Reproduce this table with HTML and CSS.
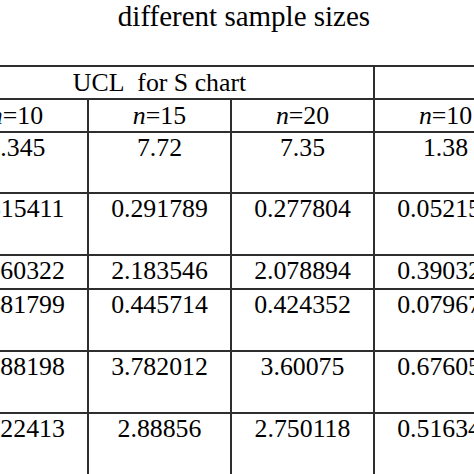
FILE: index.html
```html
<!DOCTYPE html>
<html>
<head>
<meta charset="utf-8">
<link rel="stylesheet" href="styles.css">
</head>
<body>
<h1 class="title">different sample sizes</h1>
<div class="frame">
<table class="grid">
<colgroup>
<col class="c"><col class="c"><col class="c"><col class="c"><col class="c"><col class="c">
</colgroup>
<tr class="h1">
<td colspan="3">UCL&nbsp; for S chart</td>
<td colspan="3">LCL&nbsp; for S chart</td>
</tr>
<tr class="h2">
<td><i>n</i>=10</td><td><i>n</i>=15</td><td><i>n</i>=20</td>
<td><i>n</i>=10</td><td><i>n</i>=15</td><td><i>n</i>=20</td>
</tr>
<tr class="r61">
<td>8.345</td><td>7.72</td><td>7.35</td><td>1.38</td><td>1.27</td><td>1.21</td>
</tr>
<tr class="r62">
<td>0.315411</td><td>0.291789</td><td>0.277804</td><td>0.052151</td><td>0.048245</td><td>0.045932</td>
</tr>
<tr class="r34">
<td>2.360322</td><td>2.183546</td><td>2.078894</td><td>0.390322</td><td>0.361093</td><td>0.343785</td>
</tr>
<tr class="r62">
<td>0.481799</td><td>0.445714</td><td>0.424352</td><td>0.079672</td><td>0.073705</td><td>0.070172</td>
</tr>
<tr class="r62">
<td>4.088198</td><td>3.782012</td><td>3.60075</td><td>0.676052</td><td>0.625418</td><td>0.595443</td>
</tr>
<tr class="r62">
<td>3.122413</td><td>2.88856</td><td>2.750118</td><td>0.516344</td><td>0.477672</td><td>0.454778</td>
</tr>
</table>
</div>
</body>
</html>
```

FILE: styles.css
```css
html, body {
  margin: 0;
  padding: 0;
  overflow: hidden;
  background: #ffffff;
}

body {
  font-family: "Liberation Serif", serif;
  color: #000000;
}

.title {
  margin: 0;
  padding-left: 14px;
  font-family: "Liberation Serif", serif;
  font-size: 29px;
  font-weight: normal;
  line-height: 33px;
  text-align: center;
}

.frame {
  width: 474px;
  margin-top: 32px;
  overflow: hidden;
}

.grid {
  margin-left: -56px;
  border-collapse: collapse;
  table-layout: fixed;
  width: 858px;
  font-family: "Liberation Serif", serif;
  font-size: 25.8px;
}

.grid .c {
  width: 143px;
}

.grid td {
  border: 2px solid #2e2e2e;
  padding: 1px 0 0 0;
  font-family: "Liberation Serif", serif;
  text-align: center;
  vertical-align: top;
  line-height: 28px;
  white-space: nowrap;
}

.grid .h1 td,
.grid .h2 td {
  vertical-align: middle;
  padding-top: 0;
}

.h1, .h2 { height: 33px; }
.r61 { height: 61px; }
.r62 { height: 62px; }
.r34 { height: 34px; }
```
